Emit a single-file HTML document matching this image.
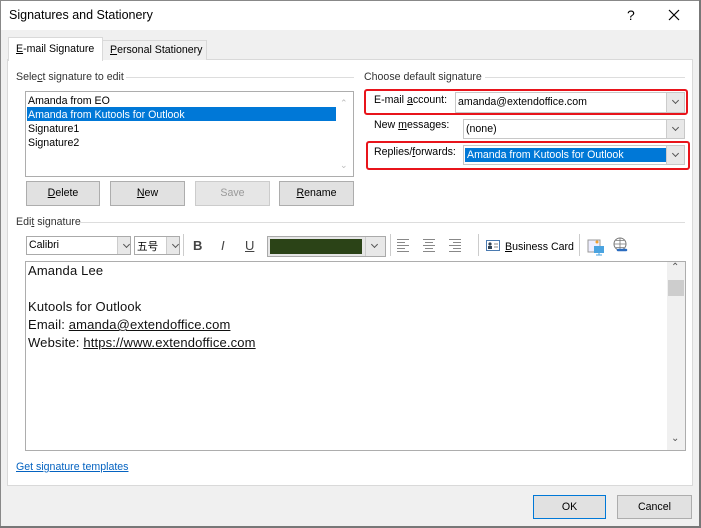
<!DOCTYPE html>
<html><head><meta charset="utf-8"><style>
*{margin:0;padding:0;box-sizing:border-box}
body{width:701px;height:528px;overflow:hidden;background:#f0f0f0;font-family:"Liberation Sans","Noto Sans CJK SC",sans-serif;font-size:10.6px;color:#000;position:relative}
.a{position:absolute;white-space:nowrap}
.btn{position:absolute;background:#e1e1e1;border:1px solid #adadad;text-align:center;line-height:23px;font-size:10.6px}
.sel{position:absolute;background:#fff;border:1px solid #c8c8c8}
.arr{position:absolute;top:0;right:0;bottom:0;width:18px;background:#e8e8e8;border-left:1px solid #ccc}
.arr:after{content:"";position:absolute;left:6px;top:5px;width:4px;height:4px;border-right:1px solid #555;border-bottom:1px solid #555;transform:rotate(45deg)}
.line{position:absolute;height:1px;background:#ddd}
u{text-decoration:underline}
</style></head><body>
<div class="a" style="left:0;top:0;width:701px;height:30px;background:#fff;border-top:1px solid #888"></div>
<div class="a" style="left:9px;top:8px;font-size:12.5px">Signatures and Stationery</div>
<div class="a" style="left:627px;top:7px;font-size:14px">?</div>
<svg class="a" style="left:668px;top:9px" width="12" height="12"><path d="M1 1L11 11M11 1L1 11" stroke="#000" stroke-width="1.2"/></svg>
<div class="a" style="left:0;top:0;width:1px;height:528px;background:#888"></div>
<div class="a" style="left:699px;top:0;width:2px;height:528px;background:#777"></div>
<div class="a" style="left:0;top:526px;width:701px;height:2px;background:#777"></div>
<div class="a" style="left:7px;top:59px;width:686px;height:427px;background:#fff;border:1px solid #d9d9d9"></div>
<div class="a" style="left:102px;top:40px;width:105px;height:20px;background:#f0f0f0;border:1px solid #d9d9d9;border-bottom:none"></div>
<div class="a" style="left:110px;top:44px"><u>P</u>ersonal Stationery</div>
<div class="a" style="left:8px;top:37px;width:95px;height:24px;background:#fff;border:1px solid #d9d9d9;border-bottom:none"></div>
<div class="a" style="left:16px;top:43px"><u>E</u>-mail Signature</div>
<div class="a" style="left:16px;top:71px;color:#333">Sele<u>c</u>t signature to edit</div>
<div class="line" style="left:126px;top:77px;width:228px"></div>
<div class="a" style="left:25px;top:91px;width:329px;height:86px;background:#fff;border:1px solid #adadad"></div>
<div class="a" style="left:27px;top:107px;width:309px;height:14px;background:#0078d7"></div>
<div class="a" style="left:28px;top:94px;line-height:14px">Amanda from EO<br><span style="color:#fff">Amanda from Kutools for Outlook</span><br>Signature1<br>Signature2</div>
<div class="a" style="left:340px;top:98px;color:#bbb;font-size:9px">&#8963;</div>
<div class="a" style="left:340px;top:160px;color:#bbb;font-size:9px">&#8964;</div>
<div class="btn" style="left:26px;top:181px;width:74px;height:25px"><u>D</u>elete</div>
<div class="btn" style="left:110px;top:181px;width:75px;height:25px"><u>N</u>ew</div>
<div class="btn" style="left:195px;top:181px;width:75px;height:25px;color:#999;background:#e6e6e6;border-color:#ccc">Save</div>
<div class="btn" style="left:279px;top:181px;width:75px;height:25px"><u>R</u>ename</div>
<div class="a" style="left:364px;top:71px;color:#333">Choose default signature</div>
<div class="line" style="left:485px;top:77px;width:200px"></div>
<div class="a" style="left:364px;top:89px;width:324px;height:26px;border:2px solid #e8141b;border-radius:3px"></div>
<div class="a" style="left:374px;top:94px">E-mail <u>a</u>ccount:</div>
<div class="sel" style="left:455px;top:92px;width:230px;height:21px"><span class="a" style="left:2px;top:3px">amanda@extendoffice.com</span><div class="arr"></div></div>
<div class="a" style="left:374px;top:119px">New <u>m</u>essages:</div>
<div class="sel" style="left:463px;top:119px;width:222px;height:20px"><span class="a" style="left:2px;top:3px">(none)</span><div class="arr"></div></div>
<div class="a" style="left:366px;top:141px;width:324px;height:29px;border:2px solid #e8141b;border-radius:3px"></div>
<div class="a" style="left:374px;top:146px">Replies/<u>f</u>orwards:</div>
<div class="sel" style="left:463px;top:145px;width:222px;height:20px"><span class="a" style="left:1px;top:2px;width:201px;height:14px;background:#0078d7;color:#fff;padding-left:2px;line-height:14px">Amanda from Kutools for Outlook</span><div class="arr"></div></div>
<div class="a" style="left:16px;top:216px;color:#333">Edi<u>t</u> signature</div>
<div class="line" style="left:80px;top:222px;width:605px"></div>
<div class="sel" style="left:26px;top:236px;width:105px;height:19px;border-color:#aaa"><span class="a" style="left:2px;top:2px">Calibri</span><div class="arr" style="width:13px"></div></div>
<div class="sel" style="left:134px;top:236px;width:46px;height:19px;border-color:#aaa"><span class="a" style="left:2px;top:2px">五号</span><div class="arr" style="width:13px"></div></div>
<div class="a" style="left:183px;top:234px;width:1px;height:22px;background:#ccc"></div>
<div class="a" style="left:193px;top:238px;font-weight:bold;font-size:13px;color:#444">B</div>
<div class="a" style="left:221px;top:238px;font-style:italic;font-size:13px;color:#444">I</div>
<div class="a" style="left:245px;top:238px;font-size:13px;color:#444;text-decoration:underline">U</div>
<div class="sel" style="left:267px;top:236px;width:119px;height:21px;border-color:#aaa;background:#e6e6e6"><div class="a" style="left:2px;top:2px;width:92px;height:15px;background:#2b4317"></div><div class="arr" style="width:20px"></div></div>
<div class="a" style="left:390px;top:234px;width:1px;height:22px;background:#ccc"></div>
<svg class="a" style="left:396px;top:238px" width="75" height="14" stroke="#888" stroke-width="1"><path d="M1 1.5h12M1 4.5h8M1 7.5h12M1 10.5h8M1 13.5h12"/><path d="M27 1.5h12M29 4.5h8M27 7.5h12M29 10.5h8M27 13.5h12"/><path d="M53 1.5h12M57 4.5h8M53 7.5h12M57 10.5h8M53 13.5h12"/></svg>
<div class="a" style="left:478px;top:234px;width:1px;height:22px;background:#ccc"></div>
<svg class="a" style="left:486px;top:240px" width="14" height="11"><rect x="0.5" y="0.5" width="13" height="10" fill="#fff" stroke="#4a7ab0"/><circle cx="4" cy="4" r="1.6" fill="#345"/><rect x="2" y="6" width="4" height="3" fill="#345"/><path d="M8 4h4M8 7h4" stroke="#888"/></svg>
<div class="a" style="left:505px;top:241px"><u>B</u>usiness Card</div>
<div class="a" style="left:579px;top:234px;width:1px;height:22px;background:#ccc"></div>
<svg class="a" style="left:587px;top:238px" width="18" height="18"><rect x="1" y="2" width="12" height="12" fill="#eef" stroke="#999"/><rect x="7" y="8" width="10" height="7" fill="#4aa3e0"/><path d="M12 15v2M9 17h6" stroke="#4aa3e0"/><circle cx="10" cy="4" r="1.5" fill="#f0a030"/></svg>
<svg class="a" style="left:613px;top:237px" width="16" height="18"><circle cx="7" cy="7" r="6" fill="none" stroke="#777"/><path d="M1 7h12M7 1v12M3 3.5h8M3 10.5h8" stroke="#777" stroke-width=".8"/><path d="M5 13h4M9 13h4" stroke="#2a6cc0" stroke-width="2.5" stroke-linecap="round"/></svg>
<div class="a" style="left:25px;top:261px;width:661px;height:190px;background:#fff;border:1px solid #adadad"></div>
<div class="a" style="left:667px;top:262px;width:18px;height:188px;background:#f0f0f0"></div>
<div class="a" style="left:668px;top:280px;width:16px;height:16px;background:#cdcdcd"></div>
<div class="a" style="left:671px;top:262px;font-size:10px;color:#555">&#8963;</div>
<div class="a" style="left:671px;top:433px;font-size:10px;color:#555">&#8964;</div>
<div class="a" style="left:28px;top:262px;font-size:13px;line-height:18px;color:#111;letter-spacing:0.15px">Amanda Lee<br><br>Kutools for Outlook<br>Email: <u>amanda@extendoffice.com</u><br>Website: <u>https://www.extendoffice.com</u></div>
<div class="a" style="left:16px;top:461px;color:#0563c1;text-decoration:underline">Get signature templates</div>
<div class="btn" style="left:533px;top:495px;width:73px;height:24px;border:1px solid #0078d7;line-height:22px">OK</div>
<div class="btn" style="left:617px;top:495px;width:75px;height:24px;line-height:22px">Cancel</div>
</body></html>
